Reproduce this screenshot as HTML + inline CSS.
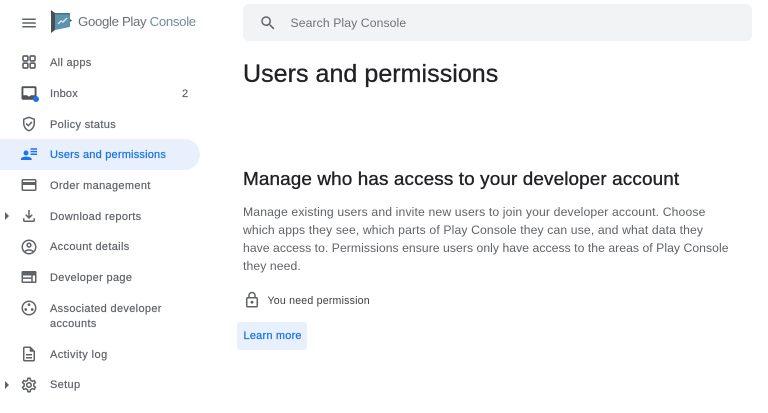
<!DOCTYPE html>
<html><head><meta charset="utf-8"><style>
html,body{margin:0;padding:0;background:#fff;width:768px;height:413px;overflow:hidden}
#r{position:relative;width:768px;height:413px;overflow:hidden;font-family:"Liberation Sans",sans-serif;filter:blur(.35px)}
.t{position:absolute;white-space:nowrap}
.n{left:50px;font-size:11px;line-height:14px;color:#5f6368;font-weight:400;letter-spacing:.33px;-webkit-text-stroke:.2px #5f6368}
svg{position:absolute}
.p{left:243px;font-size:12.2px;line-height:18px;color:#5f6368}
</style></head><body><div id="r">
<svg style="left:20px;top:14px" width="18" height="18" viewBox="0 0 24 24" fill="#5f6368"><path d="M3 18h18v-2H3v2zm0-5h18v-2H3v2zm0-7v2h18V6H3z"/></svg>
<svg style="left:50px;top:9px" width="24" height="26" viewBox="0 0 24 26"><path d="M1 1l4 3v17l-4 3z" fill="#4a4f54"/><path d="M5 4h15v14l-15 3z" fill="#5d93ad"/><path d="M5 4h15v1.500H5z" fill="#4a6f96"/><path d="M8 15l3-3 2 1 4-4" stroke="#d5e6ee" stroke-width="1.400" fill="none"/><path d="M20 10l2 1.500-2 1.500z" fill="#4a4f54"/></svg>
<div class="t" style="left:78px;top:13px;font-size:13.200px;line-height:18px;color:#6b6f73;letter-spacing:-.32px">Google Play <span style="color:#6f8c98">Console</span></div>

<div style="position:absolute;left:243px;top:4px;width:509px;height:37px;background:#f1f3f4;border-radius:6px"></div>
<svg style="left:259px;top:13.500px" width="18" height="18" viewBox="0 0 24 24" fill="#5f6368"><path d="M15.500 14h-.79l-.28-.27A6.470 6.470 0 0 0 16 9.500 6.500 6.500 0 1 0 9.500 16c1.610 0 3.090-.59 4.230-1.570l.27.28v.79l5 4.990L20.490 19l-4.990-5zm-6 0C7.010 14 5 11.990 5 9.500S7.010 5 9.500 5 14 7.010 14 9.500 11.990 14 9.500 14z"/></svg>
<div class="t" style="left:290.500px;top:14px;font-size:12.200px;line-height:18px;color:#6f7377;letter-spacing:.1px">Search Play Console</div>
<div class="t" style="left:243px;top:59px;font-size:25px;line-height:30px;color:#202124;letter-spacing:.05px;-webkit-text-stroke:.3px #202124">Users and permissions</div>

<div style="position:absolute;left:0;top:139px;width:200px;height:31px;background:#e8f0fe;border-radius:0 16px 16px 0"></div>

<svg style="left:20px;top:53px" width="18" height="18" viewBox="0 0 24 24" fill="none" stroke="#5f6368" stroke-width="2.200"><rect x="4" y="4" width="6.500" height="6.500" rx="1.500"/><rect x="13.500" y="4" width="6.500" height="6.500" rx="1.500"/><rect x="4" y="13.500" width="6.500" height="6.500" rx="1.500"/><rect x="13.500" y="13.500" width="6.500" height="6.500" rx="1.500"/></svg>
<div class="t n" style="top:56px;letter-spacing:.3px">All apps</div>

<svg style="left:20px;top:84px" width="18" height="18" viewBox="0 0 24 24" fill="#4f5357"><path d="M4 3h16a2 2 0 0 1 2 2v14a2 2 0 0 1-2 2H4a2 2 0 0 1-2-2V5a2 2 0 0 1 2-2zm.500 2.500v9.500h5l1.500 1.500h2l1.500-1.500h5V5.500h-15z"/></svg>
<div style="position:absolute;left:32.700px;top:96.300px;width:6px;height:6px;border-radius:50%;background:#1a73e8"></div>
<div class="t n" style="top:87px;letter-spacing:.2px">Inbox</div>
<div class="t n" style="left:182px;top:87px">2</div>

<svg style="left:20px;top:115px" width="18" height="18" viewBox="0 0 24 24" fill="#5f6368"><path d="M12 2L4 5v6.090c0 5.050 3.410 9.760 8 10.910 4.590-1.150 8-5.860 8-10.910V5l-8-3zm6 9.090c0 4-2.550 7.700-6 8.830-3.450-1.130-6-4.820-6-8.830V6.390l6-2.250 6 2.250v4.700zM8.820 10.590L7.410 12 11 15.590l5.660-5.660-1.420-1.410-4.240 4.240-2.180-2.170z"/></svg>
<div class="t n" style="top:118px">Policy status</div>

<svg style="left:20px;top:146px" width="18" height="18" viewBox="0 0 24 24" fill="#1a73e8"><circle cx="8" cy="9.300" r="3.300"/><path d="M1.300 18.700v-1.500c0-2.100 4.300-3 6.700-3s7.500.9 7.500 3v1.500H1.300z"/><path d="M14 3h8.700v2H14zM14 6.500h8.700v2H14zM14 10h8.700v2H14z"/></svg>
<div class="t n" style="top:148px;color:#1a73e8;letter-spacing:.2px;-webkit-text-stroke:.25px #1a73e8">Users and permissions</div>

<svg style="left:20px;top:176px" width="18" height="18" viewBox="0 0 24 24" fill="#5f6368"><path d="M20 4H4c-1.110 0-2 .89-2 2v12c0 1.110.89 2 2 2h16c1.110 0 2-.89 2-2V6c0-1.110-.89-2-2-2zm0 14H4v-6h16v6zm0-10H4V6h16v2z"/></svg>
<div class="t n" style="top:179px">Order management</div>

<svg style="left:4px;top:212px" width="6" height="8" viewBox="0 0 6 8" fill="#5f6368"><path d="M1 0l4 4-4 4z"/></svg>
<svg style="left:20px;top:207px" width="18" height="18" viewBox="0 0 24 24" fill="#5f6368"><path d="M18 15v3H6v-3H4v3c0 1.100.9 2 2 2h12c1.100 0 2-.9 2-2v-3h-2zm-1-4l-1.410-1.410L13 12.170V4h-2v8.170L8.410 9.590 7 11l5 5 5-5z"/></svg>
<div class="t n" style="top:210px">Download reports</div>

<svg style="left:20px;top:238px" width="18" height="18" viewBox="0 0 24 24" fill="#5f6368"><path d="M12 2C6.480 2 2 6.480 2 12s4.480 10 10 10 10-4.480 10-10S17.520 2 12 2zM7.350 18.500C8.660 17.560 10.260 17 12 17s3.340.56 4.650 1.500C15.340 19.440 13.740 20 12 20s-3.340-.56-4.650-1.500zm10.790-1.380C16.450 15.800 14.320 15 12 15s-4.450.8-6.140 2.120C4.700 15.730 4 13.950 4 12c0-4.420 3.580-8 8-8s8 3.580 8 8c0 1.950-.7 3.730-1.860 5.120zM12 6c-1.930 0-3.500 1.570-3.500 3.500S10.070 13 12 13s3.500-1.570 3.500-3.500S13.930 6 12 6zm0 5c-.83 0-1.500-.67-1.500-1.500S11.170 8 12 8s1.500.67 1.500 1.500S12.830 11 12 11z"/></svg>
<div class="t n" style="top:240px">Account details</div>

<svg style="left:20px;top:268px" width="18" height="18" viewBox="0 0 24 24" fill="#5f6368"><path d="M3.500 4h17A1.500 1.500 0 0 1 22 5.500v13a1.500 1.500 0 0 1-1.500 1.500h-17A1.500 1.500 0 0 1 2 18.500v-13A1.500 1.500 0 0 1 3.500 4zM4 10v2.500h11V10H4zm0 4.500V18h11v-3.500H4zM17 10v8h3v-8h-3z"/></svg>
<div class="t n" style="top:271px">Developer page</div>

<svg style="left:20px;top:299px" width="18" height="18" viewBox="0 0 24 24" fill="#5f6368"><path d="M12 2C6.480 2 2 6.480 2 12s4.480 10 10 10 10-4.480 10-10S17.520 2 12 2zm0 18c-4.410 0-8-3.590-8-8s3.590-8 8-8 8 3.590 8 8-3.590 8-8 8z"/><circle cx="7.700" cy="14" r="1.800"/><circle cx="12" cy="7.500" r="1.800"/><circle cx="16.300" cy="14" r="1.800"/></svg>
<div class="t n" style="top:302px">Associated developer</div>
<div class="t n" style="top:317px">accounts</div>

<svg style="left:20px;top:345px" width="18" height="18" viewBox="0 0 24 24" fill="#5f6368"><path d="M8 16h8v2H8zm0-4h8v2H8zm6-10H6c-1.100 0-2 .9-2 2v16c0 1.100.89 2 1.990 2H18c1.100 0 2-.9 2-2V8l-6-6zm4 18H6V4h7v5h5v11z"/></svg>
<div class="t n" style="top:348px;letter-spacing:.42px">Activity log</div>

<svg style="left:4px;top:381px" width="6" height="8" viewBox="0 0 6 8" fill="#5f6368"><path d="M1 0l4 4-4 4z"/></svg>
<svg style="left:20px;top:376px" width="18" height="18" viewBox="0 0 24 24" fill="#5f6368"><path d="M19.430 12.980c.04-.32.070-.64.070-.98s-.03-.66-.07-.98l2.110-1.650c.19-.15.240-.42.120-.64l-2-3.460c-.12-.22-.39-.3-.61-.22l-2.490 1c-.52-.4-1.080-.73-1.690-.98l-.38-2.650A.488.488 0 0 0 14 2h-4c-.25 0-.46.18-.49.42l-.38 2.650c-.61.25-1.170.59-1.690.98l-2.490-1c-.23-.09-.49 0-.61.22l-2 3.460c-.13.22-.07.49.12.64l2.110 1.650c-.04.32-.07.65-.07.98s.03.66.07.98l-2.110 1.650c-.19.15-.24.42-.12.64l2 3.460c.12.22.39.3.61.22l2.490-1c.52.4 1.080.73 1.690.98l.38 2.650c.03.24.24.42.49.42h4c.25 0 .46-.18.49-.42l.38-2.650c.61-.25 1.170-.59 1.690-.98l2.490 1c.23.09.49 0 .61-.22l2-3.460c.12-.22.07-.49-.12-.64l-2.110-1.650zM17.450 11.270c.04.31.05.52.05.73 0 .21-.02.43-.05.73l-.14 1.130.89.7 1.080.84-.7 1.210-1.270-.51-1.040-.42-.9.680c-.43.32-.84.56-1.250.73l-1.060.43-.16 1.130-.2 1.350h-1.400l-.19-1.350-.16-1.130-1.060-.43c-.43-.18-.83-.41-1.230-.71l-.91-.7-1.060.43-1.270.51-.7-1.210 1.080-.84.89-.7-.14-1.130c-.03-.31-.05-.54-.05-.74s.02-.43.05-.73l.14-1.130-.89-.7-1.080-.84.7-1.210 1.270.51 1.040.42.9-.68c.43-.32.84-.56 1.250-.73l1.060-.43.16-1.130.2-1.350h1.390l.19 1.350.16 1.130 1.060.43c.43.18.83.41 1.230.71l.91.7 1.060-.43 1.270-.51.7 1.210-1.070.85-.89.7.14 1.130zM12 8c-2.210 0-4 1.790-4 4s1.790 4 4 4 4-1.790 4-4-1.790-4-4-4zm0 6c-1.100 0-2-.9-2-2s.9-2 2-2 2 .9 2 2-.9 2-2 2z"/></svg>
<div class="t n" style="top:378px">Setup</div>

<div class="t" style="left:243px;top:168px;font-size:18.900px;line-height:24px;color:#202124;letter-spacing:.12px;-webkit-text-stroke:.35px #202124">Manage who has access to your developer account</div>
<div class="t p" style="top:203px;letter-spacing:.14px">Manage existing users and invite new users to join your developer account. Choose</div>
<div class="t p" style="top:221px;letter-spacing:.127px">which apps they see, which parts of Play Console they can use, and what data they</div>
<div class="t p" style="top:239px;letter-spacing:.045px">have access to. Permissions ensure users only have access to the areas of Play Console</div>
<div class="t p" style="top:257px;letter-spacing:.09px">they need.</div>

<svg style="left:243px;top:291px" width="18" height="18" viewBox="0 0 24 24" fill="#5f6368"><path d="M18 8h-1V6c0-2.760-2.240-5-5-5S7 3.240 7 6v2H6c-1.100 0-2 .9-2 2v10c0 1.100.9 2 2 2h12c1.100 0 2-.9 2-2V10c0-1.100-.9-2-2-2zM9 6c0-1.660 1.340-3 3-3s3 1.340 3 3v2H9V6zm9 14H6V10h12v10zm-6-3c1.100 0 2-.9 2-2s-.9-2-2-2-2 .9-2 2 .9 2 2 2z"/></svg>
<div class="t" style="left:267.500px;top:293.500px;font-size:10.600px;line-height:14px;color:#3c4043;letter-spacing:.2px">You need permission</div>

<div style="position:absolute;left:237px;top:322px;width:70px;height:28px;background:#e8f0fe;border-radius:3px"></div>
<div class="t" style="left:243.500px;top:329px;font-size:11px;line-height:14px;color:#1a73e8;letter-spacing:.2px;-webkit-text-stroke:.25px #1a73e8">Learn more</div>
</div></body></html>
